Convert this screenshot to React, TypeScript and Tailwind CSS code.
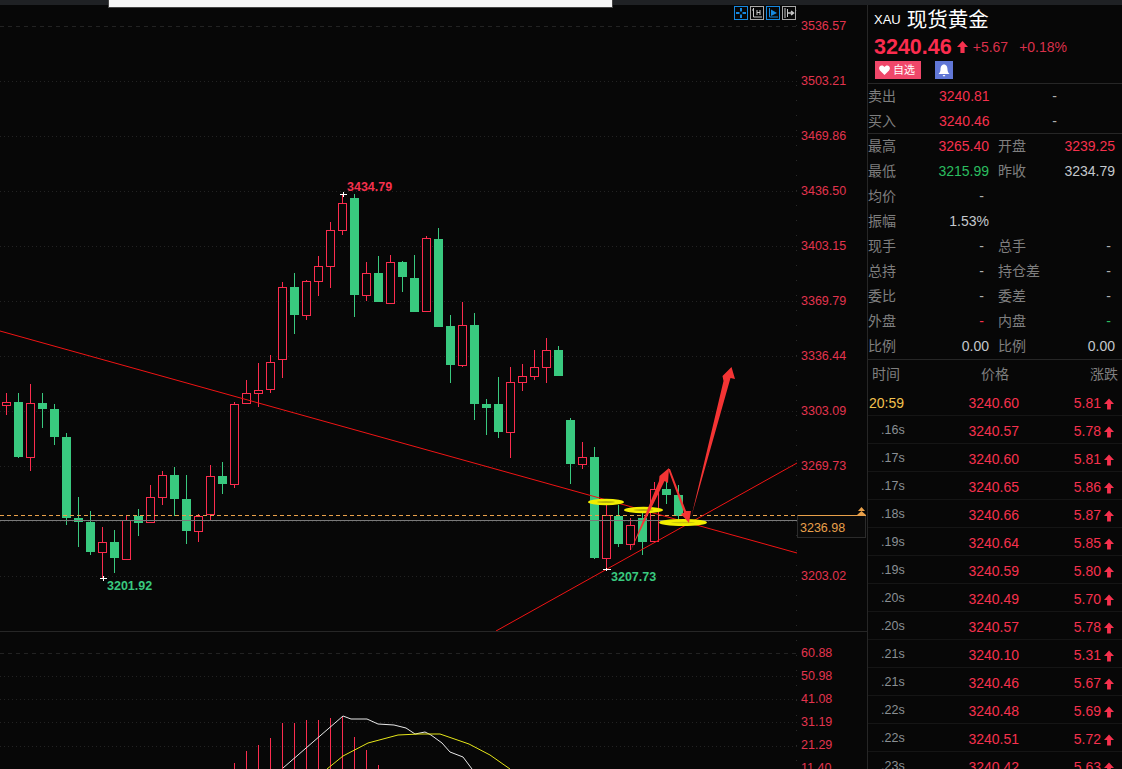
import React from 'react';

type Candle = [number, number, number, number, number, 'r' | 'g'];

// x, wick top, body top, body bottom, wick bottom, colour
const candles: Candle[] = [
  [6, 393, 402, 405, 415, 'r'],
  [18, 393, 402, 457, 458, 'g'],
  [30, 384, 403, 457, 471, 'r'],
  [42, 393, 403, 409, 428, 'g'],
  [54, 404, 409, 437, 445, 'g'],
  [66, 433, 437, 518, 525, 'g'],
  [78, 497, 518, 522, 547, 'g'],
  [90, 511, 522, 552, 555, 'g'],
  [102, 527, 542, 552, 578, 'r'],
  [114, 530, 542, 558, 573, 'g'],
  [126, 515, 520, 559, 560, 'r'],
  [138, 509, 516, 523, 536, 'g'],
  [150, 485, 497, 522, 522, 'r'],
  [162, 471, 475, 497, 505, 'r'],
  [174, 467, 475, 499, 516, 'g'],
  [186, 475, 499, 531, 544, 'g'],
  [198, 514, 516, 531, 542, 'r'],
  [210, 465, 476, 514, 520, 'r'],
  [222, 462, 476, 484, 494, 'g'],
  [234, 402, 404, 484, 488, 'r'],
  [246, 380, 393, 403, 403, 'r'],
  [258, 363, 390, 393, 407, 'r'],
  [270, 355, 362, 389, 393, 'r'],
  [282, 282, 287, 359, 378, 'r'],
  [294, 273, 287, 315, 334, 'g'],
  [306, 280, 281, 315, 320, 'r'],
  [318, 256, 266, 281, 296, 'r'],
  [330, 222, 230, 266, 288, 'r'],
  [342, 194, 203, 230, 235, 'r'],
  [354, 194, 198, 295, 317, 'g'],
  [366, 262, 273, 295, 301, 'r'],
  [378, 256, 273, 302, 302, 'g'],
  [390, 255, 262, 303, 303, 'r'],
  [402, 261, 262, 277, 292, 'g'],
  [414, 255, 278, 312, 312, 'g'],
  [426, 236, 238, 311, 311, 'r'],
  [438, 228, 239, 327, 327, 'g'],
  [450, 315, 326, 365, 383, 'g'],
  [462, 302, 325, 365, 367, 'r'],
  [474, 313, 325, 404, 420, 'g'],
  [486, 399, 404, 408, 435, 'g'],
  [498, 377, 404, 432, 438, 'g'],
  [510, 367, 382, 432, 458, 'r'],
  [522, 364, 376, 382, 391, 'r'],
  [534, 350, 367, 376, 380, 'r'],
  [546, 338, 350, 367, 383, 'r'],
  [558, 346, 350, 376, 376, 'g'],
  [570, 418, 420, 464, 484, 'g'],
  [582, 442, 457, 464, 469, 'r'],
  [594, 447, 457, 558, 559, 'g'],
  [606, 500, 515, 558, 570, 'r'],
  [618, 505, 516, 544, 547, 'g'],
  [630, 518, 525, 544, 550, 'r'],
  [642, 513, 518, 542, 555, 'g'],
  [654, 482, 489, 541, 542, 'r'],
  [666, 480, 489, 495, 504, 'g'],
  [678, 485, 495, 516, 520, 'g'],
];

const upperAxis = ['3536.57', '3503.21', '3469.86', '3436.50', '3403.15', '3369.79', '3336.44', '3303.09', '3269.73', '', '3203.02'];
const lowerAxis = ['60.88', '50.98', '41.08', '31.19', '21.29', '11.40'];
const upperGrid = [26, 81, 136, 191, 246, 301, 356, 411, 466, 521, 576];
const lowerGrid = [653, 676, 699, 722, 746];
const macdBars: [number, number][] = [
  [234, 763], [246, 751], [258, 745], [270, 738], [282, 723], [294, 723], [306, 720], [318, 720], [330, 718], [342, 716], [354, 737], [366, 750], [378, 765],
];

const quotes = [
  ['最高', '3265.40', 'text-[#f5314d]', '开盘', '3239.25', 'text-[#f5314d]'],
  ['最低', '3215.99', 'text-[#2bbd5f]', '昨收', '3234.79', 'text-[#c4c8cc]'],
  ['均价', '-', 'text-[#b0b0b0] pr-[5px]', '', '', ''],
  ['振幅', '1.53%', 'text-[#c4c8cc]', '', '', ''],
  ['现手', '-', 'text-[#b0b0b0] pr-[5px]', '总手', '-', 'text-[#b0b0b0] pr-1'],
  ['总持', '-', 'text-[#b0b0b0] pr-[5px]', '持仓差', '-', 'text-[#b0b0b0] pr-1'],
  ['委比', '-', 'text-[#b0b0b0] pr-[5px]', '委差', '-', 'text-[#b0b0b0] pr-1'],
  ['外盘', '-', 'text-[#f5314d] pr-[5px]', '内盘', '-', 'text-[#2bbd5f] pr-1'],
  ['比例', '0.00', 'text-[#c4c8cc]', '比例', '0.00', 'text-[#c4c8cc]'],
];

const trades = [
  ['20:59', '3240.60', '5.81'],
  ['.16s', '3240.57', '5.78'],
  ['.17s', '3240.60', '5.81'],
  ['.17s', '3240.65', '5.86'],
  ['.18s', '3240.66', '5.87'],
  ['.19s', '3240.64', '5.85'],
  ['.19s', '3240.59', '5.80'],
  ['.20s', '3240.49', '5.70'],
  ['.20s', '3240.57', '5.78'],
  ['.21s', '3240.10', '5.31'],
  ['.21s', '3240.46', '5.67'],
  ['.22s', '3240.48', '5.69'],
  ['.22s', '3240.51', '5.72'],
  ['.23s', '3240.42', '5.63'],
];

function UpArrow({ className }: { className: string }) {
  return (
    <svg viewBox="0 0 11 12" className={className} fill="#f5314d">
      <path d="M5.5 0 L11 6 H7.6 V12 H3.4 V6 H0 Z" />
    </svg>
  );
}

function Tool({ blue, children }: { blue?: boolean; children: React.ReactNode }) {
  return (
    <div className={blue ? 'h-[14px] w-[14px] border border-[#1688e0]' : 'h-[14px] w-[14px] border border-[#a8a8a8]'}>
      <svg viewBox="0 0 12 12" className="h-full w-full" fill="none">
        {children}
      </svg>
    </div>
  );
}

function Chart() {
  return (
    <svg width="797" height="769" className="absolute left-0 top-0">
      {upperGrid.map((y) => (
        <line key={y} x1="0" x2="797" y1={y + 0.5} y2={y + 0.5} stroke="#222222" strokeDasharray={y === 26 ? '4 4' : '1 3'} />
      ))}
      {lowerGrid.map((y) => (
        <line key={y} x1="0" x2="797" y1={y + 0.5} y2={y + 0.5} stroke="#222222" strokeDasharray={y === 653 ? '4 4' : '1 3'} />
      ))}
      <line x1="796.5" x2="796.5" y1="10" y2="769" stroke="#2a2a2a" strokeDasharray="1 14" />

      {/* candles */}
      {candles.map(([x, wt, bt, bb, wb, c]) =>
        c === 'g' ? (
          <g key={x}>
            <line x1={x + 0.5} x2={x + 0.5} y1={wt} y2={wb} stroke="#39c97f" />
            <rect x={x - 4} y={bt} width="9" height={bb - bt} fill="#39c97f" />
          </g>
        ) : (
          <g key={x}>
            <line x1={x + 0.5} x2={x + 0.5} y1={wt} y2={bt} stroke="#fb2c4e" />
            <line x1={x + 0.5} x2={x + 0.5} y1={bb} y2={wb} stroke="#fb2c4e" />
            <rect x={x - 3.5} y={bt + 0.5} width="8" height={bb - bt} fill="#070707" stroke="#fb2c4e" />
          </g>
        ),
      )}

      {/* current price lines */}
      <line x1="0" x2="797" y1="515.5" y2="515.5" stroke="#e8a04a" strokeDasharray="4 3" />
      <line x1="0" x2="797" y1="520.5" y2="520.5" stroke="#7a7a7a" />

      {/* trend lines */}
      <line x1="0" y1="331" x2="797" y2="553" stroke="#f01414" />
      <line x1="496" y1="631" x2="797" y2="463" stroke="#f01414" />

      {/* high and low marks */}
      <path d="M100 578.5 H107 M103.5 576 V581 M340 194.5 H347 M343.5 192 V197 M603 569.5 H611 M606.5 568 V571" stroke="#ffffff" />

      {/* drawn yellow rings */}
      <ellipse cx="606" cy="502" rx="18" ry="3.3" fill="#f2ee00" />
      <ellipse cx="643.5" cy="510" rx="19.5" ry="3.3" fill="#f2ee00" />
      <ellipse cx="683" cy="522.5" rx="24" ry="3.6" fill="#f2ee00" />
      <ellipse cx="606" cy="502" rx="9" ry="0.7" fill="#a39a10" />
      <ellipse cx="643.5" cy="510" rx="10" ry="0.7" fill="#a39a10" />
      <ellipse cx="683" cy="522.5" rx="12" ry="0.7" fill="#c9c30a" />

      {/* drawn arrows */}
      <path d="M630.5 551 L659 481 L659.5 476 L669 468 L668 483 L664.5 481 Z" fill="#f43434" />
      <path d="M668 469 L670 469 L686 511 L691 511 L689 523 L681 514 L684 512.5 Z" fill="#f43434" />
      <path d="M691.5 516 L723.5 381 L722.5 376 L731.5 367 L735 379 L730.5 378 Z" fill="#f43434" />

      {/* lower indicator */}
      {macdBars.map(([x, y]) => (
        <line key={x} x1={x + 0.5} x2={x + 0.5} y1={y} y2="769" stroke="#fb2c4e" />
      ))}
      <polyline
        points="283,768 343,716 351,719 367,719 378,724 394,725 406,728 415,734 425,732 431,735 442,743 450,752 463,757 472,769"
        fill="none"
        stroke="#e8e8e8"
      />
      <polyline
        points="327,769 343,756 368,743 398,735 419,734 440,734 469,744 490,755 510,769"
        fill="none"
        stroke="#e6e619"
      />
    </svg>
  );
}

export default function App() {
  return (
    <div className="relative flex h-[769px] w-[1122px] overflow-hidden bg-[#070707] font-['Liberation_Sans','Noto_Sans_CJK_SC',sans-serif]">
      {/* chart column */}
      <div className="relative w-[868px] shrink-0 border-r border-[#262626]">
        <Chart />

        {/* chart tools */}
        <div className="absolute left-[734px] top-[6px] flex gap-[2px]">
          <Tool blue>
            <path d="M6 1 V4.5 M6 7.5 V11 M1 6 H4.5 M7.5 6 H11" stroke="#1688e0" strokeWidth="2" />
          </Tool>
          <Tool>
            <path d="M2.5 1 V10 H11 M1 3 H2.5 M6 3 V8 M9 3 V8 M6 5.5 H9" stroke="#c8c8c8" />
          </Tool>
          <Tool blue>
            <path d="M2.5 1 V10 H11" stroke="#1688e0" />
            <path d="M4 2.5 L10 6 L4 9 Z" fill="#1688e0" />
          </Tool>
          <Tool>
            <path d="M2 1 V11 M4.5 2 V10" stroke="#c8c8c8" />
            <path d="M5 6 H10 M8 4 L10.5 6 L8 8" stroke="#c8c8c8" strokeWidth="1.5" />
          </Tool>
        </div>

        {/* chart labels */}
        <span className="absolute left-[347px] top-[179px] text-[12.5px] font-bold leading-4 text-[#f5314d]">3434.79</span>
        <span className="absolute left-[107px] top-[578px] text-[12.5px] font-bold leading-4 text-[#39c97f]">3201.92</span>
        <span className="absolute left-[611px] top-[569px] text-[12.5px] font-bold leading-4 text-[#39c97f]">3207.73</span>

        {/* price axis */}
        <div className="absolute left-[797px] top-[18px] flex w-[70px] flex-col">
          {upperAxis.map((v, i) => (
            <div key={i} className="h-[55px] pl-1 text-[12.5px] leading-4 text-[#e2344e]">
              {v}
            </div>
          ))}
        </div>
        <div className="absolute left-[797px] top-[645px] flex w-[70px] flex-col">
          {lowerAxis.map((v) => (
            <div key={v} className="h-[23px] pl-1 text-[12.5px] leading-4 text-[#e2344e]">
              {v}
            </div>
          ))}
        </div>

        {/* last price tag */}
        <div className="absolute left-[797px] top-[515px] h-[23px] w-[69px] border border-[#2b2b2b] border-t-[#e8a04a] bg-[#0a0a0a] pl-[2px] pt-[4px] text-[12.5px] leading-4 text-[#e8a04a]">
          3236.98
        </div>
        <svg width="9" height="9" viewBox="0 0 9 9" className="absolute left-[857px] top-[507px]" fill="#e8a04a">
          <path d="M4.5 0 L8 4 H1 Z M4.5 4 L9 8 V9 H0 V8 Z" />
        </svg>

        <div className="absolute left-0 top-[631px] h-px w-[867px] bg-[#262626]" />
      </div>

      {/* quote panel */}
      <div className="flex min-w-0 flex-1 flex-col text-[14px] leading-[25px]">
        <div className="h-[84px] shrink-0 border-b border-[#262626] pl-[6px] pt-[5px]">
          <div className="flex h-[28px] items-center gap-[6px] text-white">
            <span className="text-[13px]">XAU</span>
            <span className="text-[20.5px]">现货黄金</span>
          </div>
          <div className="flex h-[28px] items-center">
            <span className="text-[21.5px] font-bold text-[#fb2c4e]">3240.46</span>
            <UpArrow className="ml-[5px] h-[12px] w-[11px]" />
            <span className="ml-[5px] text-[#d9304a]">+5.67</span>
            <span className="ml-[11px] text-[#d9304a]">+0.18%</span>
          </div>
          <div className="flex items-center gap-[14px] pl-px">
            <div className="flex h-[18px] w-[46px] items-center gap-[3px] bg-[#f0476a] pl-1 text-[11px] leading-none text-white">
              <svg viewBox="0 0 12 11" className="h-[10px] w-[11px]" fill="#fff">
                <path d="M6 11 L1 6 C-1 3.5 0.5 0.5 3 0.5 C4.3 0.5 5.4 1.2 6 2.2 C6.6 1.2 7.7 0.5 9 0.5 C11.5 0.5 13 3.5 11 6 Z" />
              </svg>
              自选
            </div>
            <div className="flex h-[18px] w-[18px] items-center justify-center bg-[#6177d6]">
              <svg viewBox="0 0 12 13" className="h-[13px] w-[12px]" fill="#fff">
                <path d="M6 0.5 C3.5 0.5 2.5 3 2.5 5.5 C2.5 8 1.5 9 0.5 10 H11.5 C10.5 9 9.5 8 9.5 5.5 C9.5 3 8.5 0.5 6 0.5 Z M4.5 11 H7.5 L6 12.8 Z" />
              </svg>
            </div>
          </div>
        </div>

        {/* bid and ask */}
        <div className="h-[50px] shrink-0 border-b border-[#262626]">
          {[['卖出', '3240.81'], ['买入', '3240.46']].map(([k, v]) => (
            <div key={k} className="grid h-[25px] grid-cols-[71px_50px_71px] items-center">
              <span className="text-[#7f7f7f]">{k}</span>
              <span className="text-[#f5314d]">{v}</span>
              <span className="pr-[3px] text-right text-[#b0b0b0]">-</span>
            </div>
          ))}
        </div>

        {/* quote table */}
        <div className="h-[226px] shrink-0 border-b border-[#262626]">
          {quotes.map(([a, b, bc, c, d, dc], i) => (
            <div key={i} className="grid h-[25px] grid-cols-[121px_1fr] items-center pr-[7px]">
              <div className="flex justify-between">
                <span className="text-[#7f7f7f]">{a}</span>
                <span className={bc}>{b}</span>
              </div>
              <div className="flex justify-between pl-[9px]">
                <span className="text-[#7f7f7f]">{c}</span>
                <span className={dc}>{d}</span>
              </div>
            </div>
          ))}
        </div>

        {/* tick list */}
        <div className="grid h-[28px] shrink-0 grid-cols-[60px_77px_1fr] items-center px-[4px] text-[#7f7f7f]">
          <span>时间</span>
          <span className="text-right">价格</span>
          <span className="text-right">涨跌</span>
        </div>
        {trades.map(([t, p, d], i) => (
          <div key={i} className="grid h-[28px] shrink-0 grid-cols-[60px_90px_1fr] items-center border-b border-[#151515] pl-[1px] pr-[8px]">
            <span className={i === 0 ? 'pt-[2px] text-[#f2c14e]' : 'pl-[12px] text-[12.5px] text-[#8a8f94]'}>{t}</span>
            <span className="pt-[3px] text-right text-[#f5314d]">{p}</span>
            <span className="flex items-center justify-end gap-[3px] pt-[3px] text-[#f5314d]">
              {d}
              <UpArrow className="h-[12px] w-[10px]" />
            </span>
          </div>
        ))}
      </div>

      {/* window strip along the top */}
      <div className="absolute left-0 top-0 h-[5px] w-full bg-[#1f2124]">
        <div className="ml-[108px] h-[8px] w-[505px] border border-t-0 border-[#444] bg-[#f5f5f5]" />
      </div>
    </div>
  );
}
